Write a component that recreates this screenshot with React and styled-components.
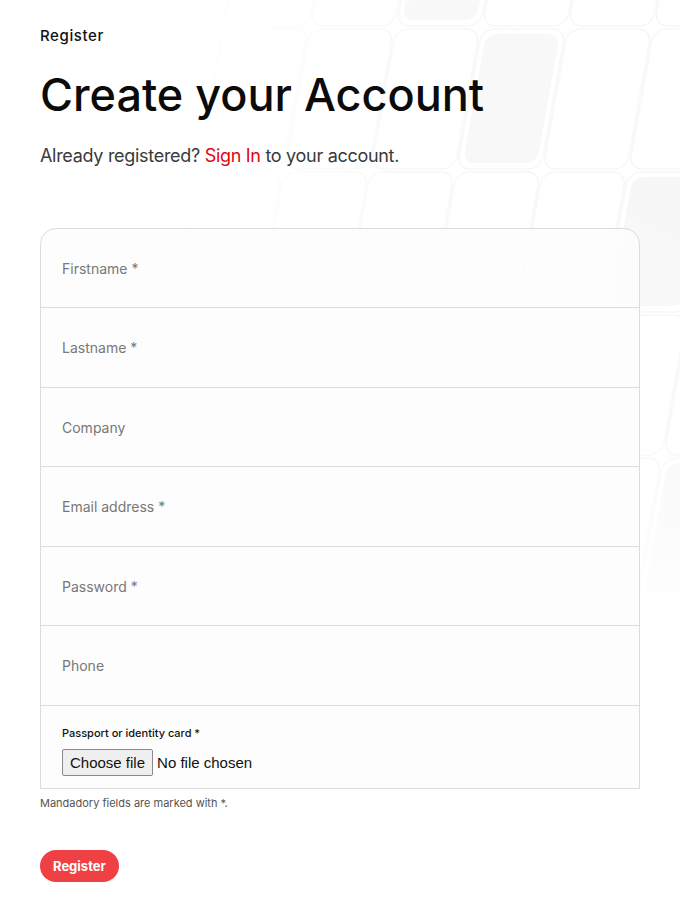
import React from 'react';
import styled, { createGlobalStyle } from 'styled-components';

const GlobalStyle = createGlobalStyle`
  html, body {
    margin: 0;
    padding: 0;
    background: #ffffff;
  }
  body {
    font-family: Inter, "Liberation Sans", sans-serif;
    color: #111;
  }
`;

const Page = styled.div`
  position: relative;
  min-height: 907px;
  overflow: hidden;
`;

const Backdrop = styled.svg`
  position: absolute;
  top: 0;
  left: 0;
  width: 680px;
  height: 907px;
  pointer-events: none;
`;

const Content = styled.main`
  position: relative;
  padding: 27px 40px 24px;
  display: flex;
  flex-direction: column;
`;

const Crumb = styled.div`
  font-size: 15px;
  font-weight: 500;
  letter-spacing: 0.6px;
  color: #111;
  line-height: 18px;
`;

const Title = styled.h1`
  margin: 23px 0 0;
  font-family: Inter, "Liberation Sans", sans-serif;
  font-size: 45px;
  font-weight: 500;
  letter-spacing: 0;
  line-height: 54px;
  color: #0b0b0b;
`;

const Lead = styled.p`
  margin: 22px 0 0;
  font-size: 18px;
  line-height: 24px;
  color: #3a3a3a;
  letter-spacing: -0.3px;
`;

const Link = styled.a`
  color: #e3060f;
  text-decoration: none;
`;

const Card = styled.form`
  margin-top: 60px;
  border: 1px solid #dcdcdc;
  border-radius: 16px 16px 0 0;
  background: rgba(253, 253, 253, 0.85);
  display: flex;
  flex-direction: column;
`;

const Row = styled.div`
  height: ${(p) => p.$h || 79}px;
  border-top: ${(p) => (p.$first ? 'none' : '1px solid #dcdcdc')};
  display: flex;
  flex-direction: ${(p) => (p.$stack ? 'column' : 'row')};
  align-items: ${(p) => (p.$stack ? 'flex-start' : 'center')};
  padding: ${(p) => (p.$stack ? '20px 21px 0' : '0 21px')};
  box-sizing: border-box;
`;

const Field = styled.input`
  width: 100%;
  border: none;
  outline: none;
  background: transparent;
  font-family: Inter, "Liberation Sans", sans-serif;
  font-size: 14px;
  color: #222;
  padding: 0;
  &::placeholder {
    color: #787878;
  }
`;

const FileLabel = styled.span`
  font-size: 11px;
  font-weight: 500;
  color: #111;
  line-height: 14px;
`;

const FilePick = styled.label`
  margin-top: 9px;
  display: flex;
  align-items: center;
  gap: 4px;
  font-family: "Liberation Sans", Arial, sans-serif;
  font-size: 15px;
  color: #111;
  cursor: pointer;

  input {
    display: none;
  }
`;

const FileButton = styled.span`
  height: 27px;
  box-sizing: border-box;
  padding: 0 7px;
  display: inline-flex;
  align-items: center;
  border: 1px solid #8a8a8a;
  border-radius: 2px;
  background: #efefef;
  color: #111;
`;

const Note = styled.p`
  margin: 7px 0 0;
  font-size: 11px;
  color: #555;
  line-height: 14px;
`;

const Submit = styled.button`
  margin-top: 40px;
  align-self: flex-start;
  height: 32px;
  padding: 0 13px;
  border: none;
  border-radius: 16px;
  background: #ef4044;
  color: #fff;
  font-family: Inter, "Liberation Sans", sans-serif;
  font-size: 13px;
  font-weight: 700;
  cursor: pointer;
`;

const fields = [
  { name: 'firstname', label: 'Firstname *', h: 78 },
  { name: 'lastname', label: 'Lastname *', h: 80 },
  { name: 'company', label: 'Company', h: 79 },
  { name: 'email', label: 'Email address *', h: 80 },
  { name: 'password', label: 'Password *', type: 'password', h: 79 },
  { name: 'phone', label: 'Phone', h: 80 },
];

// filled tiles, as (column, row) in the skewed grid
const filled = [
  [2, -1],
  [3, 0],
  [5, 1],
  [6, 3],
];

function Tiles() {
  return (
    <Backdrop viewBox="0 0 680 907">
      <defs>
        <pattern
          id="tile"
          x="56"
          y="28"
          width="86"
          height="143"
          patternUnits="userSpaceOnUse"
          patternTransform="skewX(-10.1)"
        >
          <rect x="1" y="1" width="84" height="140" rx="13" fill="none" stroke="#f0f0f0" strokeWidth="1" />
        </pattern>
        <radialGradient id="fade" cx="720" cy="110" r="580" gradientUnits="userSpaceOnUse">
          <stop offset="0" stopColor="#fff" stopOpacity="0.9" />
          <stop offset="0.55" stopColor="#fff" stopOpacity="0.75" />
          <stop offset="0.82" stopColor="#fff" stopOpacity="0.2" />
          <stop offset="1" stopColor="#fff" stopOpacity="0" />
        </radialGradient>
        <mask id="fadeMask">
          <rect width="680" height="907" fill="url(#fade)" />
        </mask>
      </defs>
      <g mask="url(#fadeMask)">
        <rect x="-200" y="-200" width="1100" height="1300" fill="url(#tile)" />
        <g transform="skewX(-10.1)">
          {filled.map(([k, j]) => (
            <rect
              key={`${k}-${j}`}
              x={228 + 86 * k + 6}
              y={28 + 143 * j + 6}
              width="74"
              height="129"
              rx="11"
              fill="#f6f6f6"
            />
          ))}
        </g>
      </g>
    </Backdrop>
  );
}

export default function App() {
  return (
    <Page>
      <GlobalStyle />
      <Tiles />
      <Content>
        <Crumb>Register</Crumb>
        <Title>Create your Account</Title>
        <Lead>
          Already registered? <Link href="#">Sign In</Link> to your account.
        </Lead>
        <Card onSubmit={(e) => e.preventDefault()}>
          {fields.map((f, i) => (
            <Row key={f.name} $first={i === 0} $h={f.h}>
              <Field name={f.name} type={f.type || 'text'} placeholder={f.label} />
            </Row>
          ))}
          <Row $stack $h={83}>
            <FileLabel>Passport or identity card *</FileLabel>
            <FilePick>
              <input type="file" name="passport" />
              <FileButton>Choose file</FileButton>
              <span>No file chosen</span>
            </FilePick>
          </Row>
        </Card>
        <Note>Mandadory fields are marked with *.</Note>
        <Submit type="submit">Register</Submit>
      </Content>
    </Page>
  );
}
